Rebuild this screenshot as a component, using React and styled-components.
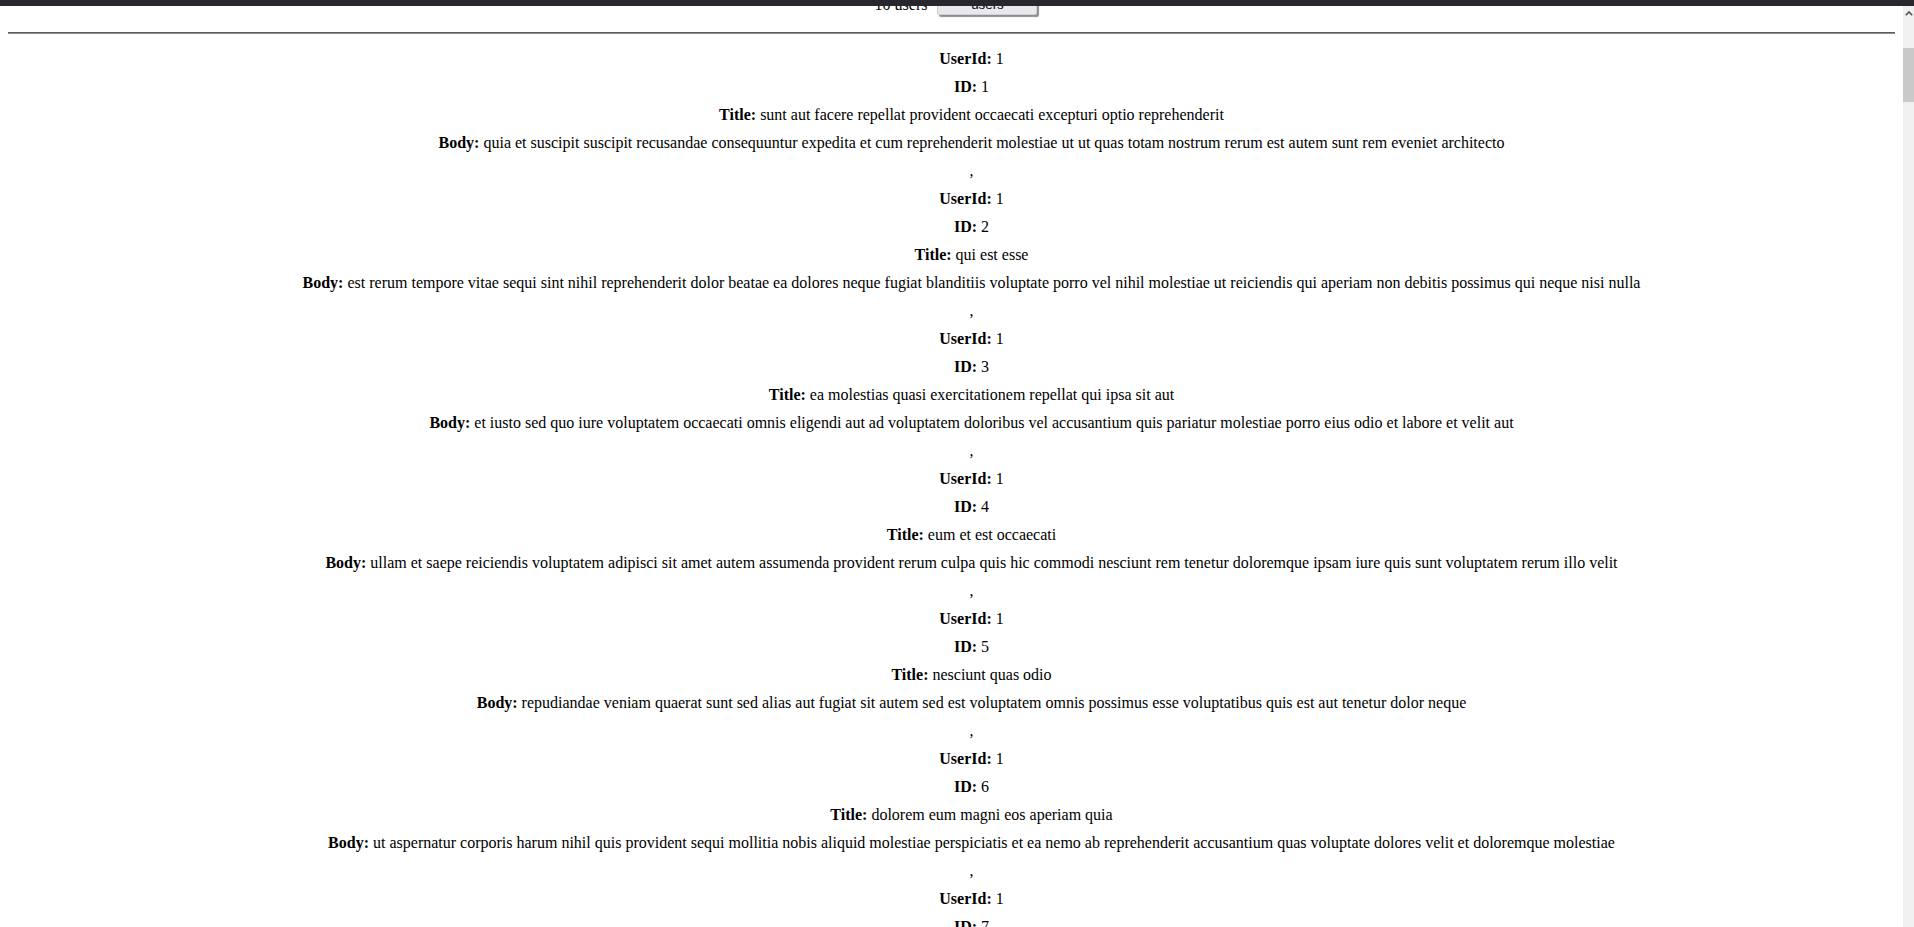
import React from 'react'
import styled, { createGlobalStyle } from 'styled-components'

const GlobalStyle = createGlobalStyle`
  html, body {
    margin: 0;
    height: 100%;
    overflow: hidden;
    background: #fff;
  }
  body {
    font-family: "Liberation Serif", "Times New Roman", serif;
    font-size: 16px;
    color: #000;
  }
`

const posts = [
  {
    userId: 1,
    id: 1,
    title: 'sunt aut facere repellat provident occaecati excepturi optio reprehenderit',
    body: 'quia et suscipit suscipit recusandae consequuntur expedita et cum reprehenderit molestiae ut ut quas totam nostrum rerum est autem sunt rem eveniet architecto',
  },
  {
    userId: 1,
    id: 2,
    title: 'qui est esse',
    body: 'est rerum tempore vitae sequi sint nihil reprehenderit dolor beatae ea dolores neque fugiat blanditiis voluptate porro vel nihil molestiae ut reiciendis qui aperiam non debitis possimus qui neque nisi nulla',
  },
  {
    userId: 1,
    id: 3,
    title: 'ea molestias quasi exercitationem repellat qui ipsa sit aut',
    body: 'et iusto sed quo iure voluptatem occaecati omnis eligendi aut ad voluptatem doloribus vel accusantium quis pariatur molestiae porro eius odio et labore et velit aut',
  },
  {
    userId: 1,
    id: 4,
    title: 'eum et est occaecati',
    body: 'ullam et saepe reiciendis voluptatem adipisci sit amet autem assumenda provident rerum culpa quis hic commodi nesciunt rem tenetur doloremque ipsam iure quis sunt voluptatem rerum illo velit',
  },
  {
    userId: 1,
    id: 5,
    title: 'nesciunt quas odio',
    body: 'repudiandae veniam quaerat sunt sed alias aut fugiat sit autem sed est voluptatem omnis possimus esse voluptatibus quis est aut tenetur dolor neque',
  },
  {
    userId: 1,
    id: 6,
    title: 'dolorem eum magni eos aperiam quia',
    body: 'ut aspernatur corporis harum nihil quis provident sequi mollitia nobis aliquid molestiae perspiciatis et ea nemo ab reprehenderit accusantium quas voluptate dolores velit et doloremque molestiae',
  },
  {
    userId: 1,
    id: 7,
    title: 'magnam facilis autem',
    body: 'dolore placeat quibusdam ea quo vitae magni quis enim qui quis quo nemo aut saepe quidem repellat excepturi ut quia sunt ut sequi eos ea sed quas',
  },
]

const Screen = styled.div`
  height: 100vh;
  display: grid;
  grid-template-rows: 6px 1fr;
`

const TopStrip = styled.div`
  background: #29272e;
`

const Viewport = styled.div`
  display: grid;
  grid-template-columns: 1fr 11px;
  min-height: 0;
  overflow: hidden;
`

// page is shown scrolled down a little, so the header is partly hidden
const Page = styled.div`
  padding: 0 8px;
  margin-top: -12px;
  min-width: 0;
`

const Header = styled.div`
  display: flex;
  justify-content: center;
  align-items: center;
  gap: 10px;
  height: 21px;
  padding-left: 9px;
`

const Count = styled.span`
  line-height: 18px;
`

const UsersButton = styled.button`
  width: 100px;
  height: 21px;
  padding: 1px 6px;
  font-family: "Liberation Sans", Arial, sans-serif;
  font-size: 13.33px;
  color: #000;
  background: #e9e9ed;
  border: 1px solid #cfcfd4;
  border-radius: 2px;
  box-shadow: 2px 2px 1px #8e8e8e;
`

const Rule = styled.hr`
  margin: 17px 0 0;
  height: 0;
  border: none;
  border-top: 1px solid #5e5e5e;
  border-bottom: 1px solid #8d8d8d;
`

const PostList = styled.ul`
  list-style: none;
  margin: 16px 0 0;
  padding: 0 0 0 40px;
  display: flex;
  flex-direction: column;
  gap: 10px;
  text-align: center;
`

const Post = styled.li`
  display: flex;
  flex-direction: column;
  gap: 10px;
`

const Field = styled.div`
  line-height: 18px;
  white-space: nowrap;
`

const Label = styled.b`
  font-weight: bold;
`

const Scrollbar = styled.div`
  background: #f0f0f0;
  display: flex;
  flex-direction: column;
`

const ScrollArrow = styled.div`
  height: 14px;
  display: flex;
  align-items: center;
  justify-content: center;
  color: #505050;
`

const Thumb = styled.div`
  height: 54px;
  margin-top: 28px;
  background: #c9c9c9;
`

const TrackRest = styled.div`
  flex: 1;
`

const Chevron = ({ down }) => (
  <svg width="8" height="5" viewBox="0 0 8 5">
    <path
      d={down ? 'M0.8 0.8 L4 4 L7.2 0.8' : 'M0.8 4.2 L4 1 L7.2 4.2'}
      fill="none"
      stroke="currentColor"
      strokeWidth="1.6"
    />
  </svg>
)

const App = () => {
  return (
    <Screen>
      <GlobalStyle />
      <TopStrip />
      <Viewport>
        <Page>
          <Header>
            <Count>10 users</Count>
            <UsersButton>users</UsersButton>
          </Header>
          <Rule />
          <PostList>
            {posts.map(post => (
              <Post key={post.id}>
                <Field><Label>UserId:</Label> {post.userId}</Field>
                <Field><Label>ID:</Label> {post.id}</Field>
                <Field><Label>Title:</Label> {post.title}</Field>
                <Field><Label>Body:</Label> {post.body}</Field>
                <Field>,</Field>
              </Post>
            ))}
          </PostList>
        </Page>
        <Scrollbar>
          <ScrollArrow><Chevron /></ScrollArrow>
          <Thumb />
          <TrackRest />
          <ScrollArrow><Chevron down /></ScrollArrow>
        </Scrollbar>
      </Viewport>
    </Screen>
  )
}

export default App
